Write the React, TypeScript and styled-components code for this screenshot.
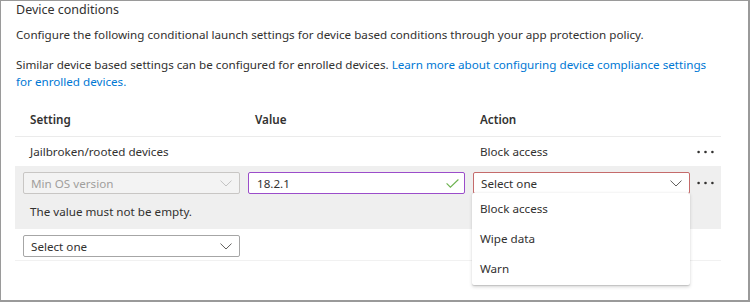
import React from "react";
import styled, { createGlobalStyle } from "styled-components";

const Global = createGlobalStyle`
  html, body { margin: 0; padding: 0; background: #ffffff; }
  body { font-family: "Noto Sans", "Open Sans", sans-serif; color: #323130; }
  * { box-sizing: border-box; }
`;

const Frame = styled.div`
  width: 750px;
  height: 302px;
  border-style: solid;
  border-color: #9a9a9a;
  border-width: 1px 2px 2px 1px;
  background: #fff;
  padding: 0 28px 0 15px;
  overflow: hidden;
`;

const Heading = styled.div`
  font-size: 12.5px;
  line-height: 18px;
  color: #323130;
`;

const Para = styled.p<{ $gap: number }>`
  margin: ${(p) => p.$gap}px 0 0;
  font-size: 11.65px;
  line-height: 17px;
  color: #323130;
`;

const Link = styled.a`
  color: #0078d4;
  text-decoration: none;
`;

const Table = styled.div`
  margin: 13px 0 0 -1px;
  width: 706px;
`;

const GridRow = styled.div<{ $bg?: string; $line?: string; $h?: number }>`
  display: grid;
  grid-template-columns: 217px 217px 217px 1fr;
  column-gap: 8px;
  align-items: center;
  padding: 0 0 0 8px;
  min-height: ${(p) => (p.$h ? `${p.$h}px` : "auto")};
  background: ${(p) => p.$bg || "transparent"};
  border-bottom: ${(p) => (p.$line ? `1px solid ${p.$line}` : "none")};
`;

const HeadCell = styled.div`
  font-size: 11.65px;
  font-weight: 600;
  padding-left: 7px;
  color: #323130;
`;

const Cell = styled.div`
  font-size: 11.65px;
  padding-left: 7px;
  color: #323130;
`;

const EditRow = styled.div`
  background: #efefef;
  padding-top: 6px;
`;

const Error = styled.div`
  font-size: 11.65px;
  line-height: 17px;
  padding: 9px 0 9px 15px;
  color: #323130;
`;

const AddRow = styled.div`
  padding: 6px 0 3px 8px;
  border-bottom: 1px solid #f1f1f1;
`;

const Field = styled.div<{ $border: string; $bg?: string; $color?: string }>`
  position: relative;
  height: 22px;
  display: flex;
  align-items: center;
  justify-content: space-between;
  border: 1px solid ${(p) => p.$border};
  border-radius: 2px;
  background: ${(p) => p.$bg || "#fff"};
  color: ${(p) => p.$color || "#323130"};
  font-size: 11.65px;
  padding: 0 7px 0 7px;
`;

const More = styled.div`
  display: flex;
  align-items: center;
  height: 17px;
  margin-left: -1px;
`;

const Menu = styled.div`
  position: absolute;
  top: 100%;
  left: -2px;
  right: -1px;
  padding: 1px 0 1px;
  background: #fff;
  box-shadow: 0 1.6px 3.6px rgba(0, 0, 0, 0.16), 0 0.3px 0.9px rgba(0, 0, 0, 0.12);
  z-index: 5;
  border-radius: 2px;
`;

const MenuItem = styled.div`
  height: 30px;
  line-height: 30px;
  padding-left: 8px;
  font-size: 11.65px;
  color: #323130;
`;

const Chevron = ({ color }: { color: string }) => (
  <svg width="12" height="7" viewBox="0 0 12 7" style={{ flexShrink: 0 }}>
    <path d="M0.5 0.6 L6 6 L11.5 0.6" fill="none" stroke={color} strokeWidth="1" />
  </svg>
);

const Check = () => (
  <svg width="13" height="9" viewBox="0 0 13 9" style={{ flexShrink: 0, marginRight: -2 }}>
    <path d="M0.6 4.4 L4.4 8.2 L12.4 0.5" fill="none" stroke="#6cb24f" strokeWidth="1.1" />
  </svg>
);

const Dots = () => (
  <svg width="17" height="4" viewBox="0 0 17 4">
    <circle cx="1.6" cy="2" r="1.3" fill="#323130" />
    <circle cx="8.5" cy="2" r="1.3" fill="#323130" />
    <circle cx="15.4" cy="2" r="1.3" fill="#323130" />
  </svg>
);

export default function App() {
  return (
    <>
      <Global />
      <Frame>
        <Heading>Device conditions</Heading>
        <Para $gap={7}>
          Configure the following conditional launch settings for device based conditions through your app protection
          policy.
        </Para>
        <Para $gap={13}>
          Similar device based settings can be configured for enrolled devices.{" "}
          <Link href="#">Learn more about configuring device compliance settings for enrolled devices.</Link>
        </Para>
        <Table>
          <GridRow $h={34} $line="#ebebeb">
            <HeadCell>Setting</HeadCell>
            <HeadCell>Value</HeadCell>
            <HeadCell>Action</HeadCell>
            <div />
          </GridRow>
          <GridRow $h={29}>
            <Cell>Jailbroken/rooted devices</Cell>
            <div />
            <Cell>Block access</Cell>
            <More>
              <Dots />
            </More>
          </GridRow>
          <EditRow>
            <GridRow>
              <Field $border="#c8c6c4" $bg="#f3f3f3" $color="#a19f9d">
                Min OS version
                <Chevron color="#c3c3c3" />
              </Field>
              <Field $border="#9b4dca" style={{ paddingLeft: 8 }}>
                18.2.1
                <Check />
              </Field>
              <Field $border="#c56b6b">
                Select one
                <Chevron color="#605e5c" />
                <Menu>
                  <MenuItem>Block access</MenuItem>
                  <MenuItem>Wipe data</MenuItem>
                  <MenuItem>Warn</MenuItem>
                </Menu>
              </Field>
              <More>
                <Dots />
              </More>
            </GridRow>
            <Error>The value must not be empty.</Error>
          </EditRow>
          <AddRow>
            <Field $border="#a6a6a6" style={{ width: 217 }}>
              Select one
              <Chevron color="#605e5c" />
            </Field>
          </AddRow>
        </Table>
      </Frame>
    </>
  );
}
